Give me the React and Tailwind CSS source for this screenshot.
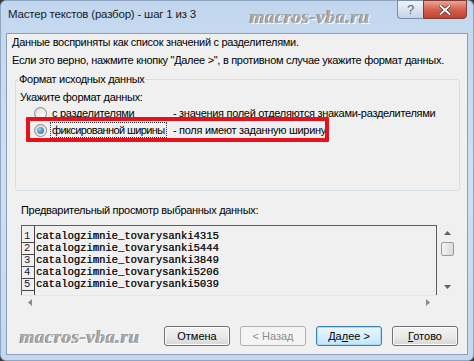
import React from "react";

function Radio({ checked }) {
  return (
    <div className="w-[13px] h-[13px] rounded-full border border-[#8a8a8a] bg-gradient-to-br from-[#d4d4d4] to-[#fafafa] flex items-center justify-center shrink-0">
      {checked ? (
        <div className="w-[7px] h-[7px] rounded-full bg-[radial-gradient(circle_at_35%_35%,#8fd0f7,#1b5f97)]" />
      ) : (
        <div className="w-[9px] h-[9px] rounded-full bg-gradient-to-br from-[#e3e3e3] to-[#fbfbfb]" />
      )}
    </div>
  );
}

function Watermark({ className }) {
  return (
    <div
      className={
        "absolute text-[19px] leading-[19px] font-bold italic text-[#a9a9a9] tracking-[0.5px] [text-shadow:1px_1px_0_#ffffff,-1px_0_0_#8a8a8a] " +
        className
      }
      style={{ fontFamily: '"Liberation Serif", serif' }}
    >
      macros-vba.ru
    </div>
  );
}

function Btn({ children, kind }) {
  const base =
    "w-[66px] h-[20px] rounded-[3px] flex items-center justify-center text-[11px] leading-none ";
  if (kind === "disabled")
    return (
      <div className={base + "border border-[#adb2b5] bg-[#f4f4f4] text-[#8d8d8d]"}>{children}</div>
    );
  if (kind === "default")
    return (
      <div className={base + "border border-[#3c7fb1] bg-gradient-to-b from-[#eaf6fd] via-[#d9effc] to-[#bee6fd] text-black shadow-[inset_0_0_0_1px_#a9dbf6]"}>
        {children}
      </div>
    );
  return (
    <div className={base + "border border-[#707070] bg-gradient-to-b from-[#f2f2f2] via-[#ebebeb] to-[#d6d6d6] text-black shadow-[inset_0_0_0_1px_#fcfcfc]"}>
      {children}
    </div>
  );
}

export default function App() {
  const rows = ["4315", "5444", "3849", "5206", "5039"];
  return (
    <div
      className="w-[474px] h-[361px] bg-[#3a3a3a] overflow-hidden whitespace-nowrap"
      style={{ fontFamily: '"Liberation Sans", Arial, sans-serif' }}
    >
      <div className="relative w-full h-full rounded-[6px] bg-gradient-to-b from-[#c2d7ee] via-[#cfe0f3] to-[#c3d8ef] flex flex-col border border-[#8fa7c2]">
        {/* title bar */}
        <div className="h-[32px] flex items-start shrink-0">
          <div className="pl-[7px] pt-[6px] text-[11.5px] tracking-[-0.2px] leading-[15px] text-[#1a1a1a]">
            Мастер текстов (разбор) - шаг 1 из 3
          </div>
          <div className="ml-auto mr-[6px] flex -mt-px">
            <div className="w-[26px] h-[19px] rounded-bl-[4px] border border-[#7a8ea6] border-r-0 bg-gradient-to-b from-[#eef3f9] via-[#dbe5f1] to-[#c3d3e6] flex items-center justify-center text-[13px] text-[#56677d]">
              ?
            </div>
            <div className="w-[44px] h-[19px] rounded-br-[4px] border border-[#7e3a33] bg-gradient-to-b from-[#e8a596] via-[#d4614f] to-[#c2412e] flex items-center justify-center">
              <svg width="12" height="10" viewBox="0 0 12 10">
                <path d="M1.5 1 L10.5 9 M10.5 1 L1.5 9" stroke="#4a1a14" strokeWidth="3.2" strokeLinecap="square" />
                <path d="M1.5 1 L10.5 9 M10.5 1 L1.5 9" stroke="#ffffff" strokeWidth="2" strokeLinecap="square" />
              </svg>
            </div>
          </div>
        </div>

        {/* content */}
        <div className="mx-[5px] h-[322px] border border-[#8c9fb6] bg-[#f0f0f0] flex flex-col text-[11px] tracking-[-0.3px] text-black">
          <div className="ml-[5px] mt-[1px] leading-[15px]">
            Данные восприняты как список значений с разделителями.
          </div>
          <div className="ml-[5px] mt-[3px] leading-[15px]">
            Если это верно, нажмите кнопку "Далее &gt;", в противном случае укажите формат данных.
          </div>

          {/* group box */}
          <div className="ml-[8px] w-[445px] mt-[11px] h-[112px] border border-[#d5dfe5] rounded-[3px] flex flex-col">
            <div className="-mt-[8px] ml-[2px] w-fit bg-[#f0f0f0] px-px leading-[15px]">
              Формат исходных данных
            </div>
            <div className="ml-[4px] mt-[3px] leading-[15px]">Укажите формат данных:</div>
            <div className="ml-[4px] h-[16px] pl-[14px] flex items-center">
              <Radio />
              <div className="ml-[4px] w-[122px] pl-[1px] leading-[15px]">с разделителями</div>
              <div className="leading-[15px]">- значения полей отделяются знаками-разделителями</div>
            </div>
            <div className="relative ml-[4px] mt-[1px] h-[16px] pl-[14px] flex items-center">
              <Radio checked />
              <div className="ml-[3px] w-[123px]">
                <span className="border border-dotted border-[#333] px-px leading-[14px] inline-block tracking-[-0.6px]">
                  фиксированной ширины
                </span>
              </div>
              <div className="leading-[15px]">- поля имеют заданную ширину</div>
              <div className="absolute left-[6px] -top-[5px] w-[303px] h-[25px] border-[4px] border-[#e4121c] rounded-[1px]" />
            </div>
          </div>

          <div className="ml-[14px] mt-[12px] leading-[15px]">
            Предварительный просмотр выбранных данных:
          </div>

          {/* preview */}
          <div className="ml-[14px] mt-[7px] w-[436px] flex flex-col tracking-normal">
            <div className="flex">
              <div
                className="w-[416px] h-[70px] border-t border-l border-r border-[#5e5e5e] bg-[#f0f0f0] flex flex-col text-[10.5px] leading-[12px] text-[#1a1a1a]"
                style={{ fontFamily: '"Liberation Mono", "Courier New", monospace' }}
              >
                <div className="h-[5px] w-[13px] border-r border-[#444] shrink-0" />
                {rows.map((r, i) => (
                  <div key={i} className="flex h-[12px] shrink-0">
                    <div className="w-[13px] border-r border-b border-[#444] pl-[2px] leading-[11px]">{i + 1}</div>
                    <div className="pl-px leading-[11px] [text-shadow:0.2px_0_0_#1a1a1a]">catalogzimnie_tovarysanki{r}</div>
                  </div>
                ))}
                <div className="flex-1 w-[13px] border-r border-[#444]" />
              </div>
              <div className="w-[20px] h-[70px] flex flex-col items-center">
                <svg className="mt-[6px]" width="7" height="4" viewBox="0 0 7 4">
                  <path d="M0 4 L3.5 0 L7 4 Z" fill="#606060" />
                </svg>
                <div className="mt-[7px] w-[13px] h-[14px] rounded-[2px] border border-[#9a9a9a] bg-gradient-to-r from-[#f3f3f3] to-[#dcdcdc]" />
                <svg className="mt-auto mb-[6px]" width="7" height="4" viewBox="0 0 7 4">
                  <path d="M0 0 L3.5 4 L7 0 Z" fill="#606060" />
                </svg>
              </div>
            </div>
            <div className="w-[416px] h-[14px] flex items-center px-[7px] border-t border-[#e6e6e6]">
              <svg width="4" height="7" viewBox="0 0 4 7">
                <path d="M4 0 L0 3.5 L4 7 Z" fill="#8a8a8a" />
              </svg>
              <svg className="ml-auto" width="4" height="7" viewBox="0 0 4 7">
                <path d="M0 0 L4 3.5 L0 7 Z" fill="#8a8a8a" />
              </svg>
            </div>
          </div>

          {/* buttons */}
          <div className="mt-[17px] ml-[157px] flex gap-[10px] tracking-normal">
            <Btn>Отмена</Btn>
            <Btn kind="disabled">&lt; Назад</Btn>
            <Btn kind="default">
              <span>
                Да<u>л</u>ее &gt;
              </span>
            </Btn>
            <Btn>
              <span>
                <u>Г</u>отово
              </span>
            </Btn>
          </div>
        </div>

        <Watermark className="left-[249px] top-[6px]" />
        <Watermark className="left-[19px] top-[326px]" />
      </div>
    </div>
  );
}
